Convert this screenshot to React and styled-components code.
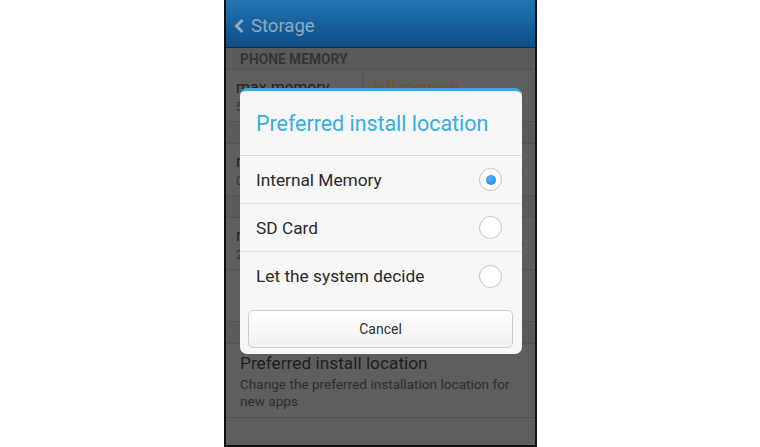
import React from "react";
import styled, { createGlobalStyle } from "styled-components";

const Global = createGlobalStyle`
  html, body { margin: 0; padding: 0; background: #ffffff; }
  body { font-family: Roboto, "Noto Sans", "Liberation Sans", sans-serif; }
`;

const Page = styled.div`
  display: flex;
  padding-left: 224px;
  height: 447px;
  box-sizing: border-box;
`;

const Phone = styled.div`
  position: relative;
  width: 309px;
  height: 445px;
  border: 2px solid #111;
  border-top: none;
  background: #5e5e5e;
  display: flex;
  flex-direction: column;
  overflow: hidden;
`;

const Header = styled.div`
  height: 48px;
  flex: none;
  box-sizing: border-box;
  display: flex;
  align-items: center;
  gap: 6px;
  padding: 4px 0 0 8px;
  background: linear-gradient(#2474b3, #0c4e86);
  border-bottom: 1px solid #1b2a36;
  color: #8fa9bf;
  font-size: 18.5px;
`;

const Section = styled.div`
  height: 22px;
  flex: none;
  box-sizing: border-box;
  display: flex;
  align-items: center;
  padding-left: 14px;
  background: #5a5a5a;
  border-bottom: 1px solid #525252;
  color: #363636;
  font-size: 13.8px;
  font-weight: 700;
`;

const Row = styled.div`
  height: 52px;
  flex: none;
  display: flex;
  align-items: stretch;
  padding: 0 12px 0 10px;
  border-bottom: 1px solid #525252;
  box-sizing: border-box;
`;

const Col = styled.div`
  display: flex;
  flex-direction: column;
  gap: 2px;
  padding-top: 8px;
  font-size: 16px;
  line-height: 20px;
  color: #242424;
  ${(p) => (p.$split ? `width: 126px; flex: none; border-right: 1px solid #525252;` : `flex: 1;`)}
  ${(p) => p.$right && `padding-left: 10px; color: #7a4f1c;`}
`;

const Sub = styled.div`
  font-size: 12px;
  line-height: 15px;
  color: #333;
`;

const Chevron = styled.span`
  align-self: center;
  width: 0;
  height: 0;
  border-top: 4px solid transparent;
  border-bottom: 4px solid transparent;
  border-left: 4px solid #2a2a2a;
  margin-left: auto;
`;

const PrefRow = styled.div`
  height: 74px;
  flex: none;
  padding: 8px 14px 0;
  box-sizing: border-box;
  border-bottom: 1px solid #525252;
  color: #1e1e1e;
`;

const PrefTitle = styled.div`
  font-size: 17.3px;
  line-height: 22px;
`;

const PrefSub = styled.div`
  font-size: 13.6px;
  line-height: 16.5px;
  color: #2f2f2f;
  margin-top: 2px;
`;

const Dialog = styled.div`
  position: absolute;
  top: 88px;
  left: 14px;
  width: 282px;
  border-radius: 7px;
  border-top: 3px solid #3aa6e6;
  background: #f7f7f7;
  display: flex;
  flex-direction: column;
  padding-bottom: 6px;
  overflow: hidden;
`;

const Title = styled.div`
  height: 65px;
  box-sizing: border-box;
  display: flex;
  align-items: center;
  padding-left: 16px;
  font-size: 21.4px;
  color: #35ade6;
  border-bottom: 1px solid #dcdcdc;
  box-shadow: 0 1px 0 #ffffff;
`;

const Option = styled.div`
  height: 48px;
  display: flex;
  align-items: center;
  justify-content: space-between;
  padding: 0 20px 0 16px;
  font-size: 17.3px;
  color: #2a2a2a;
  box-sizing: border-box;
  border-bottom: ${(p) => (p.$last ? "none" : "1px solid #e2e2e2")};
`;

const Radio = styled.span`
  width: 21px;
  height: 21px;
  border-radius: 50%;
  border: 1px solid #c4c4c4;
  background: #ffffff;
  display: flex;
  align-items: center;
  justify-content: center;
  &::after {
    content: "";
    display: ${(p) => (p.$on ? "block" : "none")};
    width: 10px;
    height: 10px;
    border-radius: 50%;
    background: radial-gradient(circle at 40% 35%, #4fb3f5, #1684e0);
  }
`;

const Button = styled.div`
  margin: 10px 9px 0 8px;
  height: 38px;
  border: 1px solid #cfcfcf;
  border-radius: 5px;
  box-sizing: border-box;
  background: linear-gradient(#ffffff, #f1f1f1);
  display: flex;
  align-items: center;
  justify-content: center;
  font-size: 14px;
  color: #303030;
`;

const options = [
  { label: "Internal Memory", on: true },
  { label: "SD Card", on: false },
  { label: "Let the system decide", on: false },
];

export default function App() {
  return (
    <>
      <Global />
      <Page>
        <Phone>
          <Header>
            <svg width="11" height="16" viewBox="0 0 11 16">
              <path d="M8.5 2 L2.5 8 L8.5 14" fill="none" stroke="#8fa9bf" strokeWidth="3" />
            </svg>
            Storage
          </Header>
          <Section>PHONE MEMORY</Section>
          <Row>
            <Col $split>
              max memory
              <Sub>5.6 GB</Sub>
            </Col>
            <Col $right>left memory</Col>
            <Chevron />
          </Row>
          <Section />
          <Row>
            <Col>
              rom
              <Sub>0 B</Sub>
            </Col>
            <Chevron />
          </Row>
          <Section />
          <Row>
            <Col>
              ram
              <Sub>2 GB</Sub>
            </Col>
            <Chevron />
          </Row>
          <Row />
          <Section />
          <PrefRow>
            <PrefTitle>Preferred install location</PrefTitle>
            <PrefSub>Change the preferred installation location for new apps</PrefSub>
          </PrefRow>
          <Dialog>
            <Title>Preferred install location</Title>
            {options.map((o, i) => (
              <Option key={o.label} $last={i === options.length - 1}>
                {o.label}
                <Radio $on={o.on} />
              </Option>
            ))}
            <Button>Cancel</Button>
          </Dialog>
        </Phone>
      </Page>
    </>
  );
}
